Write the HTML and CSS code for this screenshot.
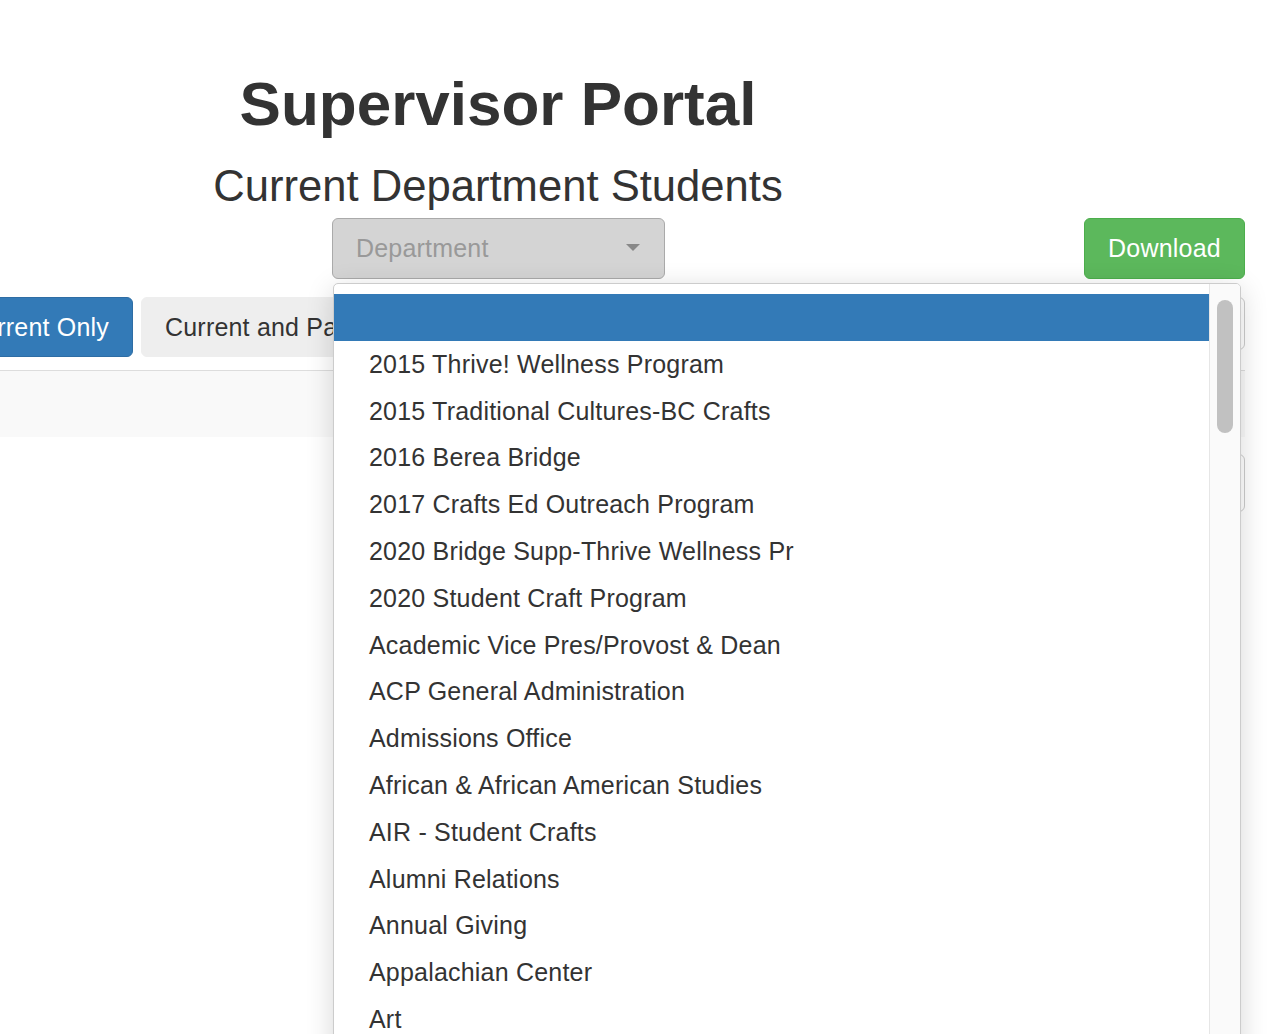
FILE: index.html
```html
<!DOCTYPE html>
<html lang="en">
<head>
<meta charset="utf-8">
<title>Supervisor Portal</title>
<link rel="stylesheet" href="styles.css">
</head>
<body>
<div class="page">
  <header class="head">
    <h1 class="title">Supervisor Portal</h1>
    <h2 class="subtitle">Current Department Students</h2>
  </header>

  <div class="toolbar">
    <div class="select">
      <span class="select-text">Department</span>
      <span class="caret"></span>
    </div>
    <button class="btn btn-success">Download</button>
  </div>

  <div class="filters">
    <div class="btn-group">
      <button class="btn btn-primary">Current Only</button>
      <button class="btn btn-default">Current and Past</button>
    </div>
    <div class="search-box"></div>
  </div>

  <div class="table-top"></div>
  <div class="table-band"></div>
  <div class="lower">
    <div class="lower-box"></div>
  </div>

  <div class="dropdown">
    <ul class="options">
      <li class="opt active">&nbsp;</li>
      <li class="opt">2015 Thrive! Wellness Program</li>
      <li class="opt">2015 Traditional Cultures-BC Crafts</li>
      <li class="opt">2016 Berea Bridge</li>
      <li class="opt">2017 Crafts Ed Outreach Program</li>
      <li class="opt">2020 Bridge Supp-Thrive Wellness Pr</li>
      <li class="opt">2020 Student Craft Program</li>
      <li class="opt">Academic Vice Pres/Provost &amp; Dean</li>
      <li class="opt">ACP General Administration</li>
      <li class="opt">Admissions Office</li>
      <li class="opt">African &amp; African American Studies</li>
      <li class="opt">AIR - Student Crafts</li>
      <li class="opt">Alumni Relations</li>
      <li class="opt">Annual Giving</li>
      <li class="opt">Appalachian Center</li>
      <li class="opt">Art</li>
    </ul>
    <div class="scroll-track">
      <div class="scroll-thumb"></div>
    </div>
  </div>
</div>
</body>
</html>
```

FILE: styles.css
```css
* { box-sizing: border-box; }

html, body {
  margin: 0;
  padding: 0;
  background: #fff;
  overflow: hidden;
}

body {
  font-family: "Liberation Sans", Arial, Helvetica, sans-serif;
  color: #333;
  width: 1280px;
  height: 1034px;
}

.page {
  position: relative;
  width: 1280px;
  height: 1034px;
  overflow: hidden;
}

.head {
  width: 996px;
  text-align: center;
  padding-top: 64px;
}

.title {
  margin: 0;
  font-size: 62px;
  line-height: 80px;
  font-weight: 700;
  color: #333;
}

.subtitle {
  margin: 12px 0 0;
  font-size: 43.6px;
  font-weight: 400;
  line-height: 60px;
  color: #333;
}

.toolbar {
  display: flex;
  align-items: flex-start;
  width: 1245px;
  padding-left: 332px;
  margin-top: 2px;
}

.select {
  width: 333px;
  height: 61px;
  background: #d4d4d4;
  border: 1px solid #aaa;
  border-radius: 6px;
  display: flex;
  align-items: center;
  padding: 0 24px 0 23px;
}

.select-text {
  flex: 1;
  font-size: 25px;
  letter-spacing: 0.2px;
  color: #999;
}

.caret {
  width: 0;
  height: 0;
  border-left: 7px solid transparent;
  border-right: 7px solid transparent;
  border-top: 7px solid #888;
  margin-top: -2px;
}

.btn {
  font-family: inherit;
  font-size: 25px;
  letter-spacing: 0.2px;
  border: 1px solid transparent;
  border-radius: 6px;
  height: 61px;
  padding: 0 23px;
  cursor: pointer;
  white-space: nowrap;
}

.btn-success {
  margin-left: auto;
  width: 161px;
  padding: 0;
  background: #5cb85c;
  border-color: #4cae4c;
  color: #fff;
}

.filters {
  display: flex;
  align-items: flex-start;
  width: 1245px;
  margin-top: 18px;
}

.btn-group {
  display: flex;
  gap: 8px;
  margin-left: -67px;
}

.btn-group .btn {
  height: 60px;
}

.btn-primary {
  width: 200px;
  padding: 0 23px 0 0;
  text-align: right;
  background: #337ab7;
  border-color: #2e6da4;
  color: #fff;
}

.btn-default {
  background: #eee;
  border-color: #eee;
  color: #333;
  width: 300px;
  text-align: left;
}

.search-box {
  margin-left: auto;
  width: 240px;
  height: 53px;
  border: 1px solid #ccc;
  border-radius: 6px;
}

.table-top {
  width: 1245px;
  margin-top: 13px;
  border-top: 1px solid #ddd;
}

.table-band {
  width: 1245px;
  height: 66px;
  background: #f9f9f9;
}

.lower {
  width: 1245px;
  display: flex;
  justify-content: flex-end;
  padding-top: 17px;
}

.lower-box {
  width: 240px;
  height: 58px;
  border: 1px solid #ccc;
  border-radius: 6px;
}

.dropdown {
  position: absolute;
  left: 333px;
  top: 283px;
  width: 908px;
  height: 800px;
  background: #fff;
  border: 1px solid #ccc;
  border-radius: 5px 5px 0 0;
  box-shadow: 0 6px 28px rgba(0, 0, 0, 0.16);
  display: flex;
  overflow: hidden;
}

.options {
  list-style: none;
  margin: 0;
  padding: 10px 0 0;
  flex: 1;
}

.opt {
  height: 46.8px;
  line-height: 46.8px;
  padding: 0 35px;
  font-size: 25px;
  letter-spacing: 0.2px;
  color: #333;
  white-space: nowrap;
}

.opt.active {
  background: #337ab7;
  color: #fff;
}

.scroll-track {
  width: 31px;
  background: #fafafa;
  border-left: 1px solid #e6e6e6;
  padding: 16px 0 0 7px;
}

.scroll-thumb {
  width: 16px;
  height: 133px;
  border-radius: 8px;
  background: #c1c1c1;
}
```
